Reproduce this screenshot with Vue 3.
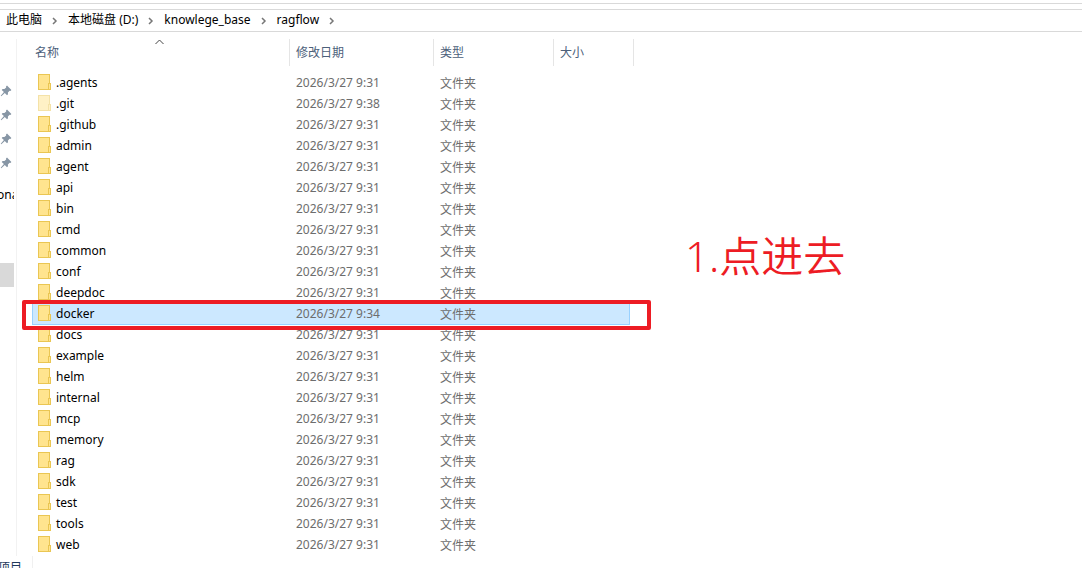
<script setup>
const crumbs = ['此电脑', '本地磁盘 (D:)', 'knowlege_base', 'ragflow']
const names = [
  '.agents', '.git', '.github', 'admin', 'agent', 'api', 'bin', 'cmd', 'common', 'conf', 'deepdoc', 'docker',
  'docs', 'example', 'helm', 'internal', 'mcp', 'memory', 'rag', 'sdk', 'test', 'tools', 'web',
]
const times = { '.git': '9:38', docker: '9:34' }
const folders = names.map((name) => ({
  name,
  date: `2026/3/27 ${times[name] ?? '9:31'}`,
  hidden: name === '.git',
  selected: name === 'docker',
}))
</script>

<template>
  <div class="explorer">
    <div class="ribbon-edge"></div>
    <nav class="address">
      <template v-for="crumb in crumbs" :key="crumb">
        <a href="#" class="crumb">{{ crumb }}</a>
        <svg class="chevron" width="6" height="8" viewBox="0 0 6 8"><path d="M1 1 4 4 1 7" fill="none" stroke="#777" stroke-width="1.5" /></svg>
      </template>
    </nav>
    <div class="body">
      <aside class="sidebar">
        <div class="pins">
          <svg v-for="n in 4" :key="n" class="pin" width="12" height="12" viewBox="0 0 12 12">
            <path d="M7 .6 11.4 5 10.4 6 9.6 5.8 7.9 7.6 8 9.3 7 10.2 4.8 8 1.3 11.3.7 10.7 3.9 7.1 1.7 4.9 2.6 4 4.4 4.1 6.2 2.4 6 1.6Z" fill="#8796a5" />
          </svg>
        </div>
        <div class="account">ona</div>
        <div class="current"></div>
      </aside>
      <main class="content">
        <table class="files">
          <colgroup><col class="c-name" /><col class="c-date" /><col class="c-type" /><col class="c-size" /></colgroup>
          <thead>
            <tr>
              <th class="name-head">名称
                <svg class="sort" width="9" height="6" viewBox="0 0 9 6"><path d="M.5 5 4.5 1 8.5 5" fill="none" stroke="#444" /></svg>
              </th>
              <th>修改日期</th>
              <th>类型</th>
              <th>大小</th>
            </tr>
          </thead>
          <tbody>
            <tr v-for="f in folders" :key="f.name" :class="{ selected: f.selected }">
              <td class="name">
                <span class="entry">
                  <svg class="folder" :class="{ faded: f.hidden }" width="13" height="16" viewBox="0 0 13 16">
                    <rect x=".5" y=".5" width="11" height="15" fill="#ffe48f" stroke="#eac653" />
                    <rect x="10.5" y="9.5" width="2" height="6" fill="#ffe48f" stroke="#eac653" />
                  </svg>
                  <span class="label">{{ f.name }}</span>
                </span>
                <span v-if="f.selected" class="marker"></span>
              </td>
              <td class="date">{{ f.date }}</td>
              <td>文件夹</td>
              <td></td>
            </tr>
          </tbody>
        </table>
      </main>
      <p class="note">1.点进去</p>
    </div>
    <footer class="status"><span class="count">项目</span></footer>
  </div>
</template>

<style>
html, body { margin: 0; height: 100%; overflow: hidden; background: #fff; }
#app { height: 100%; }
</style>

<style scoped>
.explorer {
  position: relative;
  display: flex;
  flex-direction: column;
  height: 100%;
  overflow: hidden;
  background: #fff;
  color: #000;
  font: 12px/20px "Noto Sans", "Noto Sans CJK SC", sans-serif;
}
.ribbon-edge { height: 5px; margin-top: 3px; border-top: 1px solid #d9d9d9; flex: none; }
.address {
  display: flex;
  flex: none;
  align-items: center;
  height: 21px;
  padding-left: 6px;
  border: solid #d9d9d9;
  border-width: 1px 0;
}
.crumb { padding-bottom: 1px; color: inherit; text-decoration: none; white-space: nowrap; }
.chevron { margin: 0 10px; flex: none; }
.body { position: relative; display: flex; flex: 1; min-height: 0; padding-top: 7px; }
.sidebar { width: 16px; flex: none; border-right: 1px solid #f2f2f2; overflow: hidden; }
.pins { display: flex; flex-direction: column; gap: 12px; padding-top: 46px; }
.pin { display: block; }
.account { width: 14px; margin-top: 16px; overflow: hidden; line-height: 20px; text-indent: -3px; }
.current { width: 14px; height: 24px; margin-top: 58px; background: #d9d9d9; }
.content { flex: 1; min-width: 0; padding-left: 15px; }
.files { table-layout: fixed; width: 602px; border-collapse: separate; border-spacing: 0; }
.c-name { width: 258px; }
.c-date { width: 144px; }
.c-type { width: 120px; }
.c-size { width: 80px; }
th {
  position: relative;
  height: 27px;
  padding: 0 0 0 6px;
  border-right: 1px solid #e5e5e5;
  color: #4c607a;
  font-weight: 400;
  text-align: left;
}
.name-head { padding-left: 3px; }
.sort { position: absolute; left: 123px; top: 0; }
tbody::before { content: ""; display: block; height: 7px; }
td { height: 21px; padding: 0 0 0 6px; color: #6d6d6d; line-height: 21px; white-space: nowrap; }
.name { color: #000; }
.entry { display: flex; align-items: center; gap: 5px; height: 21px; }
.folder { flex: none; margin-bottom: 3px; }
.label { padding-bottom: 2px; }
.date { height: 19px; padding-bottom: 2px; line-height: 19px; }
.faded { opacity: .5; }
.selected {
  position: relative;
  background:
    linear-gradient(#cce8ff, #cce8ff) 1px 0 / calc(100% - 6px) calc(100% - 1px) no-repeat,
    linear-gradient(#99d1ff, #99d1ff) 0 0 / calc(100% - 4px) 100% no-repeat;
}
.marker {
  position: absolute;
  z-index: 1;
  inset: -4px -17px -5px -10px;
  border: 4px solid #ed1c24;
  border-radius: 2px;
}
.note { position: absolute; left: 685px; top: 196px; margin: 0; color: #ed1c24; font-size: 42px; line-height: 56px; font-weight: 350; white-space: nowrap; }
.status { flex: none; height: 12px; overflow: hidden; color: #1e395b; line-height: 24px; }
.count { display: inline-block; width: 34px; margin-left: -2px; border-right: 1px solid #f0f0f0; }
</style>
